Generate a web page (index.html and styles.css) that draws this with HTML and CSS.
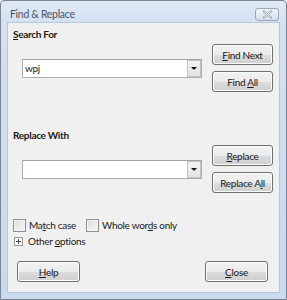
FILE: index.html
```html
<!DOCTYPE html>
<html>
<head>
<meta charset="utf-8">
<link rel="stylesheet" href="styles.css">
</head>
<body>
<div class="window">
  <div class="titlebar">
    <span class="title">Find &amp; Replace</span>
    <span class="close-x">
      <svg width="11" height="9" viewBox="0 0 11 9"><path d="M2 1.5 L9 7.5 M9 1.5 L2 7.5" stroke="#8a96a4" stroke-width="2.2" stroke-linecap="round"/><path d="M2 1.5 L9 7.5 M9 1.5 L2 7.5" stroke="#ffffff" stroke-width="1" stroke-linecap="round"/></svg>
    </span>
  </div>
  <div class="client">
    <div class="label"><u>S</u>earch For</div>
    <div class="group">
      <div class="combo">
        <span class="combo-text">wpj</span>
        <span class="combo-btn"><span class="tri"></span></span>
      </div>
      <div class="btncol">
        <div class="btn"><span><u>F</u>ind Next</span></div>
        <div class="btn"><span>Find <u>A</u>ll</span></div>
      </div>
    </div>
    <div class="label label-replace">Replace With</div>
    <div class="group">
      <div class="combo">
        <span class="combo-text"></span>
        <span class="combo-btn"><span class="tri"></span></span>
      </div>
      <div class="btncol">
        <div class="btn"><span><u>R</u>eplace</span></div>
        <div class="btn"><span>Replace A<u>l</u>l</span></div>
      </div>
    </div>
    <div class="checks">
      <label class="check"><span class="box"></span><span>Ma<u>t</u>ch case</span></label>
      <label class="check"><span class="box"></span><span>Whole wor<u>d</u>s only</span></label>
    </div>
    <div class="other"><span class="plus"></span><span>Other <u>o</u>ptions</span></div>
    <div class="footer">
      <div class="btn btn-wide"><span><u>H</u>elp</span></div>
      <div class="btn btn-wide"><span><u>C</u>lose</span></div>
    </div>
  </div>
</div>
</body>
</html>
```
FILE: styles.css
```css
html, body {
  margin: 0;
  padding: 0;
  background: #ffffff;
}
body {
  font-family: "Lato", sans-serif;
  font-size: 10px;
  letter-spacing: -0.3px;
  color: #1a1a1a;
}
u {
  text-decoration: underline;
  text-underline-offset: 1px;
}
.window {
  width: 287px;
  height: 300px;
  box-sizing: border-box;
  border: 1px solid #7a8594;
  border-radius: 4px 4px 0 0;
  background: linear-gradient(180deg, #dfe9f5 0px, #d3e1f1 22px, #c9daee 100%);
  display: flex;
  flex-direction: column;
  padding: 0 6px 6px 6px;
}
.titlebar {
  height: 21px;
  display: flex;
  align-items: center;
  justify-content: space-between;
}
.title {
  font-size: 10.5px;
  color: #4a5564;
  padding-left: 3px;
  padding-top: 4px;
}
.close-x {
  width: 22px;
  height: 11px;
  margin-top: 6px;
  margin-right: 1px;
  border: 1px solid #9aa8b8;
  border-radius: 3px;
  background: linear-gradient(180deg, #eef3f9, #d5e0ec);
  display: flex;
  align-items: center;
  justify-content: center;
}
.client {
  flex: 1;
  background: #f0f0f0;
  border: 1px solid #b7c8dc;
  display: flex;
  flex-direction: column;
  padding: 3px 6px 0 4px;
}
.label {
  font-weight: 700;
  height: 16px;
  line-height: 16px;
  padding-left: 1px;
}
.label-replace {
  margin-top: 35px;
}
.group {
  margin-top: 2px;
  display: flex;
  align-items: center;
  padding-left: 10px;
}
.combo {
  width: 181px;
  height: 19px;
  box-sizing: border-box;
  border: 1px solid #abadb3;
  border-top-color: #9da2ab;
  background: #ffffff;
  display: flex;
  align-items: stretch;
}
.combo-text {
  flex: 1;
  line-height: 17px;
  padding-left: 2px;
}
.combo-btn {
  width: 14px;
  box-sizing: border-box;
  border: 1px solid #c0c2c6;
  margin: 0;
  background: linear-gradient(180deg, #f4f4f4, #e2e2e2);
  display: flex;
  align-items: center;
  justify-content: center;
}
.tri {
  width: 0;
  height: 0;
  border-left: 3px solid transparent;
  border-right: 3px solid transparent;
  border-top: 3px solid #111;
}
.btncol {
  margin-left: 10px;
  display: flex;
  flex-direction: column;
  gap: 6px;
}
.btn {
  width: 61px;
  height: 21px;
  box-sizing: border-box;
  border: 1px solid #707070;
  border-radius: 3px;
  background: linear-gradient(180deg, #f2f2f2 0%, #ebebeb 50%, #dddddd 51%, #cfcfcf 100%);
  box-shadow: inset 0 0 0 1px #fcfcfc;
  display: flex;
  align-items: center;
  justify-content: center;
  color: #1a1a1a;
  white-space: nowrap;
}
.checks {
  margin-top: 24px;
  display: flex;
  align-items: center;
  height: 16px;
  padding-left: 1px;
}
.check {
  display: flex;
  align-items: center;
  margin-right: 10px;
}
.box {
  width: 11px;
  height: 11px;
  border: 1px solid #8e8f8f;
  background: linear-gradient(135deg, #dcdcdc, #f6f6f6);
  box-shadow: inset 0 0 0 1px #f4f4f4;
  margin-right: 3px;
}
.other {
  display: flex;
  align-items: center;
  height: 16px;
  padding-left: 2px;
}
.plus {
  width: 7px;
  height: 7px;
  border: 1px solid #989898;
  background: #fbfbfb linear-gradient(#444, #444) center / 5px 1px no-repeat;
  position: relative;
  margin-right: 5px;
}
.plus::after {
  content: "";
  position: absolute;
  left: 3px;
  top: 1px;
  width: 1px;
  height: 5px;
  background: #444;
}
.footer {
  margin-top: 12px;
  display: flex;
  justify-content: space-between;
  padding: 0 5px 0 5px;
}
.btn-wide {
  width: 63px;
}
```
